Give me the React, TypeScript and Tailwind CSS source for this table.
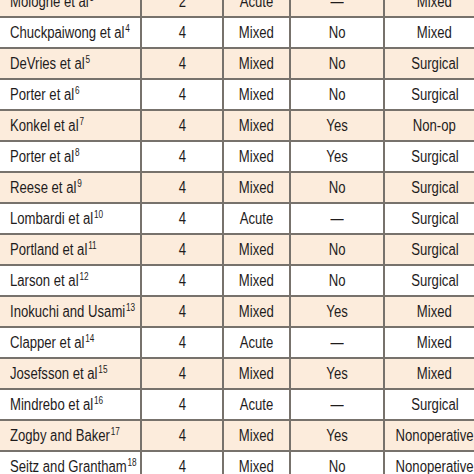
import React from 'react';

type Row = {
  author: string;
  ref: string;
  level: string;
  type: string;
  fu: string;
  tx: string;
};

const rows: Row[] = [
  { author: 'Mologne et al', ref: '3', level: '2', type: 'Acute', fu: '—', tx: 'Mixed' },
  { author: 'Chuckpaiwong et al', ref: '4', level: '4', type: 'Mixed', fu: 'No', tx: 'Mixed' },
  { author: 'DeVries et al', ref: '5', level: '4', type: 'Mixed', fu: 'No', tx: 'Surgical' },
  { author: 'Porter et al', ref: '6', level: '4', type: 'Mixed', fu: 'No', tx: 'Surgical' },
  { author: 'Konkel et al', ref: '7', level: '4', type: 'Mixed', fu: 'Yes', tx: 'Non-op' },
  { author: 'Porter et al', ref: '8', level: '4', type: 'Mixed', fu: 'Yes', tx: 'Surgical' },
  { author: 'Reese et al', ref: '9', level: '4', type: 'Mixed', fu: 'No', tx: 'Surgical' },
  { author: 'Lombardi et al', ref: '10', level: '4', type: 'Acute', fu: '—', tx: 'Surgical' },
  { author: 'Portland et al', ref: '11', level: '4', type: 'Mixed', fu: 'No', tx: 'Surgical' },
  { author: 'Larson et al', ref: '12', level: '4', type: 'Mixed', fu: 'No', tx: 'Surgical' },
  { author: 'Inokuchi and Usami', ref: '13', level: '4', type: 'Mixed', fu: 'Yes', tx: 'Mixed' },
  { author: 'Clapper et al', ref: '14', level: '4', type: 'Acute', fu: '—', tx: 'Mixed' },
  { author: 'Josefsson et al', ref: '15', level: '4', type: 'Mixed', fu: 'Yes', tx: 'Mixed' },
  { author: 'Mindrebo et al', ref: '16', level: '4', type: 'Acute', fu: '—', tx: 'Surgical' },
  { author: 'Zogby and Baker', ref: '17', level: '4', type: 'Mixed', fu: 'Yes', tx: 'Nonoperative' },
  { author: 'Seitz and Grantham', ref: '18', level: '4', type: 'Mixed', fu: 'No', tx: 'Nonoperative' },
];

// condensed look: no narrow face installed, so squeeze Liberation Sans
function Narrow({ children, left }: { children: React.ReactNode; left?: boolean }) {
  return (
    <span
      className={`inline-block whitespace-nowrap [transform:scaleX(0.82)] ${left ? 'origin-left' : 'origin-center'}`}
    >
      {children}
    </span>
  );
}

export default function App() {
  return (
    <div
      className="w-[474px] h-[474px] overflow-hidden bg-white text-[#1f1c1c]"
      style={{ fontFamily: '"Liberation Sans", Arial, sans-serif' }}
    >
      <div className="-mt-[13px] w-[484px]">
        {rows.map((r, i) => (
          <div
            key={i}
            className={`grid grid-cols-[140px_82px_67px_94px_101px] h-[31px] border-b-2 border-[#77726c] text-[16px] leading-none ${
              i % 2 === 0 ? 'bg-[#fcecdc]' : 'bg-white'
            }`}
          >
            <div className="flex items-center pl-[10px] overflow-hidden">
              <Narrow left>
                {r.author}
                <sup className="text-[10px] -top-[6px] ml-[1px]">{r.ref}</sup>
              </Narrow>
            </div>
            <div className="flex items-center justify-center border-l-2 border-[#77726c]">
              <Narrow>{r.level}</Narrow>
            </div>
            <div className="flex items-center justify-center border-l-2 border-[#77726c]">
              <Narrow>{r.type}</Narrow>
            </div>
            <div className="flex items-center justify-center border-l-2 border-[#77726c]">
              <Narrow>{r.fu}</Narrow>
            </div>
            <div className="flex items-center justify-center border-l-2 border-[#77726c]">
              <Narrow>{r.tx}</Narrow>
            </div>
          </div>
        ))}
      </div>
    </div>
  );
}
